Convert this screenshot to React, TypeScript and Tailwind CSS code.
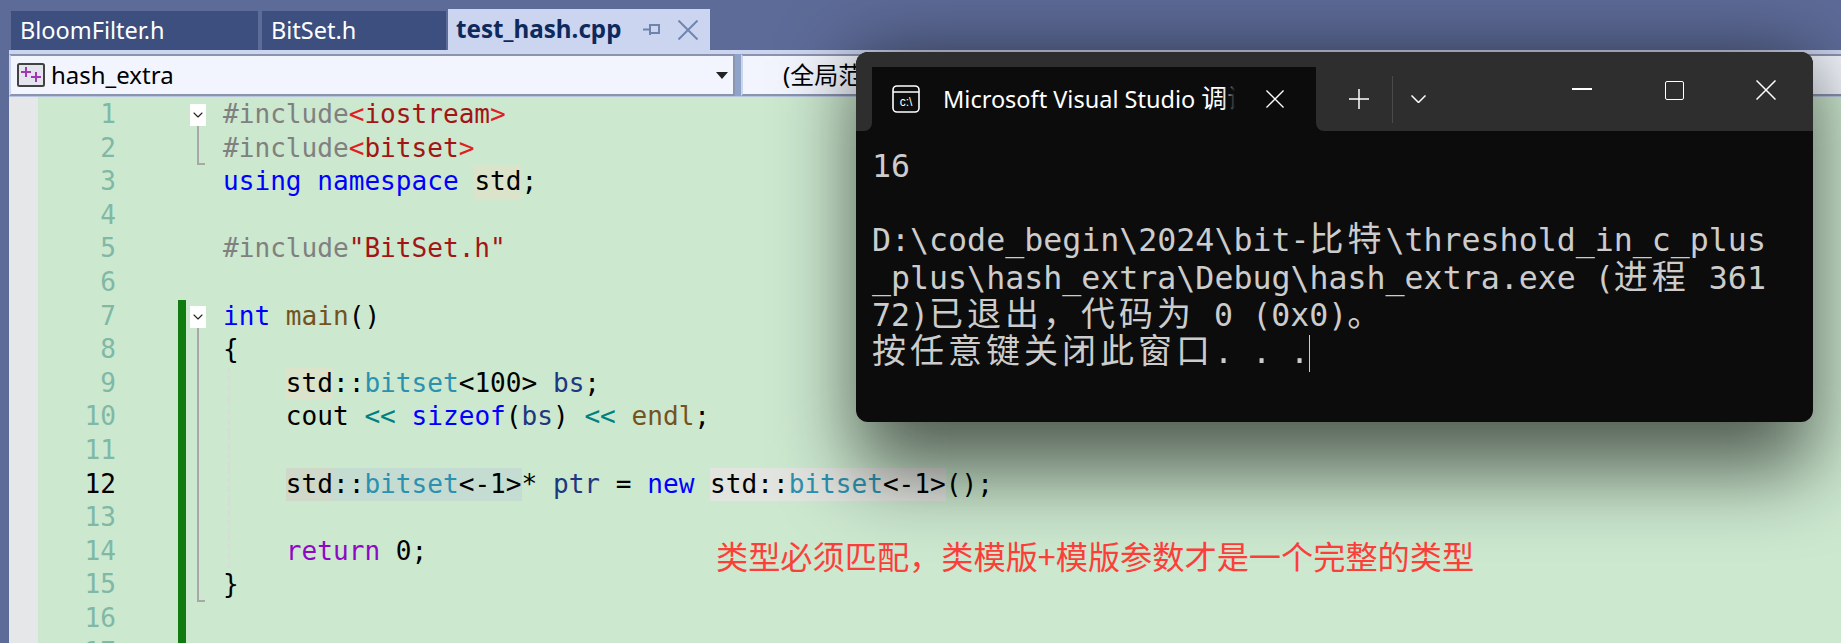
import { ChevronDown } from 'lucide-react'
import type { ReactNode } from 'react'

type Fold = 'open' | 'mid' | 'end' | 'endShort' | null

type Line = {
  code?: ReactNode
  fold?: Fold
  changed?: boolean
  guide?: boolean
  current?: boolean
}

const Dir = ({ children }: { children: ReactNode }) => <span className="text-[#808080]">{children}</span>
const Str = ({ children }: { children: ReactNode }) => <span className="text-[#a31515]">{children}</span>
const Angle = ({ children }: { children: ReactNode }) => <span className="text-[#e21f1f]">{children}</span>
const Kw = ({ children }: { children: ReactNode }) => <span className="text-[#0000ff]">{children}</span>
const Ty = ({ children }: { children: ReactNode }) => <span className="text-[#2b91af]">{children}</span>
const Fn = ({ children }: { children: ReactNode }) => <span className="text-[#74531f]">{children}</span>
const Vr = ({ children }: { children: ReactNode }) => <span className="text-[#1f377f]">{children}</span>
const Mark = ({ children, className }: { children: ReactNode; className: string }) => (
  <span className={`inline-block h-[33.6px] ${className}`}>{children}</span>
)
const Ind = () => <span>{'    '}</span>

const lines: Line[] = [
  { fold: 'open', code: <><Dir>#include</Dir><Angle>&lt;</Angle><Str>iostream</Str><Angle>&gt;</Angle></> },
  { fold: 'endShort', code: <><Dir>#include</Dir><Angle>&lt;</Angle><Str>bitset</Str><Angle>&gt;</Angle></> },
  { code: <><Kw>using namespace</Kw> <Mark className="bg-[#dce3cb]">std</Mark>;</> },
  {},
  { code: <><Dir>#include</Dir><Str>"BitSet.h"</Str></> },
  {},
  { fold: 'open', changed: true, code: <><Kw>int</Kw> <Fn>main</Fn>()</> },
  { fold: 'mid', changed: true, code: <>{'{'}</> },
  { fold: 'mid', changed: true, guide: true, code: <><Ind /><Mark className="bg-[#dce3cb]">std</Mark>::<Ty>bitset</Ty>&lt;100&gt; <Vr>bs</Vr>;</> },
  { fold: 'mid', changed: true, guide: true, code: <><Ind />cout <span className="text-[#008080]">&lt;&lt;</span> <Kw>sizeof</Kw>(<Vr>bs</Vr>) <span className="text-[#008080]">&lt;&lt;</span> <Fn>endl</Fn>;</> },
  { fold: 'mid', changed: true, guide: true },
  {
    fold: 'mid', changed: true, guide: true, current: true,
    code: <><Ind /><Mark className="bg-[#d0d8c9]">std</Mark><Mark className="bg-[#c5dcd3]">::<Ty>bitset</Ty>&lt;-1&gt;</Mark>* <Vr>ptr</Vr> = <Kw>new</Kw> <Mark className="bg-[#e2e4df]">std::<Ty>bitset</Ty>&lt;-1&gt;</Mark>();</>,
  },
  { fold: 'mid', changed: true, guide: true },
  { fold: 'mid', changed: true, guide: true, code: <><Ind /><span className="text-[#8f08c4]">return</span> 0;</> },
  { fold: 'end', changed: true, code: <>{'}'}</> },
  { changed: true },
  { changed: true },
]

function Cross({ size, width = 1.5, className }: { size: number; width?: number; className?: string }) {
  return (
    <svg viewBox="0 0 20 20" width={size} height={size} className={`shrink-0 ${className ?? ''}`} fill="none" stroke="currentColor" strokeWidth={width}>
      <path d="M0.5 0.5L19.5 19.5M19.5 0.5L0.5 19.5" />
    </svg>
  )
}

function FoldMark({ fold }: { fold: Fold }) {
  if (fold === 'open') {
    return (
      <div className="relative h-full">
        <div className="absolute left-[4px] top-[6px] flex h-[22px] w-[16px] items-center justify-center bg-white">
          <ChevronDown className="h-[20px] w-[20px] text-[#222222]" strokeWidth={1.6} />
        </div>
        <div className="absolute bottom-0 left-[11px] top-[28px] w-[2px] bg-[#a8a8a8]" />
      </div>
    )
  }
  if (fold === 'mid') return <div className="ml-[11px] h-full w-[2px] bg-[#a8a8a8]" />
  if (fold === 'end' || fold === 'endShort') {
    return <div className="ml-[11px] h-full w-[8px] border-b-2 border-l-2 border-[#a8a8a8]" />
  }
  return null
}

function EditorRow({ n, line }: { n: number; line: Line }) {
  return (
    <div className="flex h-[33.6px] shrink-0 leading-[33.6px]">
      <div className={`w-[78px] text-right ${line.current ? 'text-black' : 'text-[#80b8a6]'}`}>{n}</div>
      <div className="w-[62px]" />
      <div className={`w-[8px] ${line.changed ? 'bg-[#107c10]' : ''}`} />
      <div className="w-[37px]">
        <FoldMark fold={line.fold ?? null} />
      </div>
      <div className="relative flex-1 whitespace-pre text-black">
        {line.guide && <div className="absolute bottom-0 left-[5px] top-0 border-l-2 border-dashed border-[#d8dcd8]" />}
        {line.code}
      </div>
    </div>
  )
}

function Cjk({ children }: { children: ReactNode }) {
  return <span className="font-['Noto_Sans_CJK_SC',sans-serif] text-[34px] leading-[0px] tracking-[4px]">{children}</span>
}

function Terminal() {
  return (
    <div className="absolute left-[856px] top-[52px] h-[370px] w-[957px] overflow-hidden rounded-xl bg-[#0c0c0c]">
      <div className="h-[15px] bg-[#2e2e2e]" />
      <div className="flex h-[64px] text-white">
        <div className="w-[16px] rounded-br-lg bg-[#2e2e2e]" />
        <div className="flex w-[444px] items-center rounded-t-xl bg-[#0c0c0c] pl-[20px]">
          <svg viewBox="0 0 28 28" className="h-[28px] w-[28px]" fill="none" stroke="white" strokeWidth="1.6">
            <rect x="1" y="1" width="26" height="26" rx="4" />
            <path d="M1 7h26" />
            <text x="14" y="21" fontSize="12" fill="white" stroke="none" textAnchor="middle" fontFamily="'Liberation Sans', sans-serif">c:\</text>
          </svg>
          <div className="relative ml-[23px] w-[292px] overflow-hidden whitespace-nowrap pt-[2px] font-['Noto_Sans',sans-serif] text-[23.5px]">
            Microsoft Visual Studio <span className="font-['Noto_Sans_CJK_SC',sans-serif] text-[26px] leading-[0px]">调试控制台</span>
            <div className="absolute bottom-0 right-0 top-0 w-[12px] bg-gradient-to-r from-transparent to-[#0c0c0c]" />
          </div>
          <Cross size={18} className="ml-[31px]" />
        </div>
        <div className="flex flex-1 items-center rounded-bl-lg bg-[#2e2e2e]">
          <svg viewBox="0 0 20 20" className="ml-[33px] h-[20px] w-[20px] shrink-0" fill="none" stroke="white" strokeWidth="1.5">
            <path d="M10 0v20M0 10h20" />
          </svg>
          <div className="ml-[23px] h-[47px] w-px bg-[#4a4a4a]" />
          <svg viewBox="0 0 15 8" className="ml-[18px] h-[8px] w-[15px] shrink-0" fill="none" stroke="white" strokeWidth="1.5">
            <path d="M0.5 0.5L7.5 7.5L14.5 0.5" />
          </svg>
          <div className="mb-[20px] ml-[146px] h-[2px] w-[20px] bg-white" />
          <div className="mb-[18px] ml-[73px] h-[19px] w-[19px] rounded-[2px] border-[1.5px] border-white" />
          <Cross size={20} className="mb-[18px] ml-[72px]" />
        </div>
      </div>
      <div className="whitespace-pre px-[16px] pt-[17px] font-['DejaVu_Sans_Mono',monospace] text-[31.6px] leading-[37.2px] text-[#cccccc]">
        <div className="h-[37.2px]">16</div>
        <div className="h-[37.2px]" />
        <div className="h-[37.2px]">D:\code_begin\2024\bit-<Cjk>比特</Cjk>\threshold_in_c_plus</div>
        <div className="h-[37.2px]">_plus\hash_extra\Debug\hash_extra.exe (<Cjk>进程</Cjk> 361</div>
        <div className="h-[37.2px]">72)<Cjk>已退出，代码为</Cjk> 0 (0x0)<Cjk>。</Cjk></div>
        <div className="h-[37.2px]">
          <Cjk>按任意键关闭此窗口</Cjk>. . .<span className="inline-block h-[37px] w-px bg-[#cccccc] align-middle" />
        </div>
      </div>
    </div>
  )
}

export default function App() {
  return (
    <div className="relative flex h-[643px] w-[1841px] flex-col overflow-hidden bg-[#5d6b98]">
      <div className="flex h-[50px] shrink-0 items-end pl-[11px] font-['Noto_Sans',sans-serif] text-[23.5px] text-white">
        <div className="flex h-[39px] w-[247px] items-center bg-[#3d4f7f] pl-[9px]">BloomFilter.h</div>
        <div className="ml-[4px] flex h-[39px] w-[184px] items-center bg-[#3d4f7f] pl-[9px]">BitSet.h</div>
        <div className="ml-[2px] flex h-[41px] w-[262px] items-center bg-[#ccd5f0] pl-[8px] text-[24.2px] font-bold text-[#0e2a5c]">
          test_hash.cpp
          <svg viewBox="0 0 17 13" className="ml-[22px] h-[13px] w-[17px] shrink-0" fill="none" stroke="#6f83ad" strokeWidth="2">
            <path d="M0 6.5h7M7 1v11M7 2h9v8H7" />
          </svg>
          <Cross size={20} width={2} className="ml-[18px] text-[#6f86b0]" />
        </div>
      </div>

      <div className="ml-[9px] flex h-[47px] shrink-0 gap-[6px] border-b border-t-4 border-b-[#b8c4de] border-t-[#ccd5f0] bg-[#8fa3c9] font-['Noto_Sans','Noto_Sans_CJK_SC',sans-serif] text-[24px] text-black">
        <div className="flex h-[42px] w-[726px] items-center border-2 border-[#8a94ae] border-l-[#ccd5f0] bg-[#f2f5fd] pl-[6px] pr-[5px]">
          <svg viewBox="0 0 28 24" className="h-[24px] w-[28px] shrink-0" fill="none">
            <rect x="1" y="1" width="26" height="22" rx="1.5" fill="#e4e4ef" stroke="#424242" strokeWidth="2" />
            <path d="M9 4v10M4 9h10M19 9v10M14 14h10" stroke="#a336b5" strokeWidth="2" />
          </svg>
          <span className="ml-[6px]">hash_extra</span>
          <div className="ml-auto h-0 w-0 border-x-[6px] border-t-[7px] border-x-transparent border-t-[#222222]" />
        </div>
        <div className="flex h-[42px] flex-1 items-center border-y-2 border-l-2 border-[#8a94ae] border-l-[#ccd5f0] bg-[#f2f5fd] pl-[40px]">(全局范围)</div>
      </div>

      <div className="flex min-h-0 flex-1 overflow-hidden font-['DejaVu_Sans_Mono',monospace] text-[26.1px]">
        <div className="w-[9px] shrink-0" />
        <div className="w-[29px] shrink-0 bg-[#e6e7e8]" />
        <div className="flex min-w-0 flex-1 flex-col bg-[#cce8cf] pt-[1px]">
          {lines.map((line, i) => (
            <EditorRow key={i} n={i + 1} line={line} />
          ))}
        </div>
      </div>

      <div className="absolute left-[716px] top-[534px] whitespace-nowrap font-['Noto_Sans_CJK_SC',sans-serif] text-[32.2px] leading-[42px] text-[#fd3f3a]">
        类型必须匹配，类模版+模版参数才是一个完整的类型
      </div>

      {/* window drop shadow */}
      <div className="absolute left-[856px] top-[60px] h-[410px] w-[957px] bg-black/60 blur-[40px]" />
      <Terminal />
    </div>
  )
}
